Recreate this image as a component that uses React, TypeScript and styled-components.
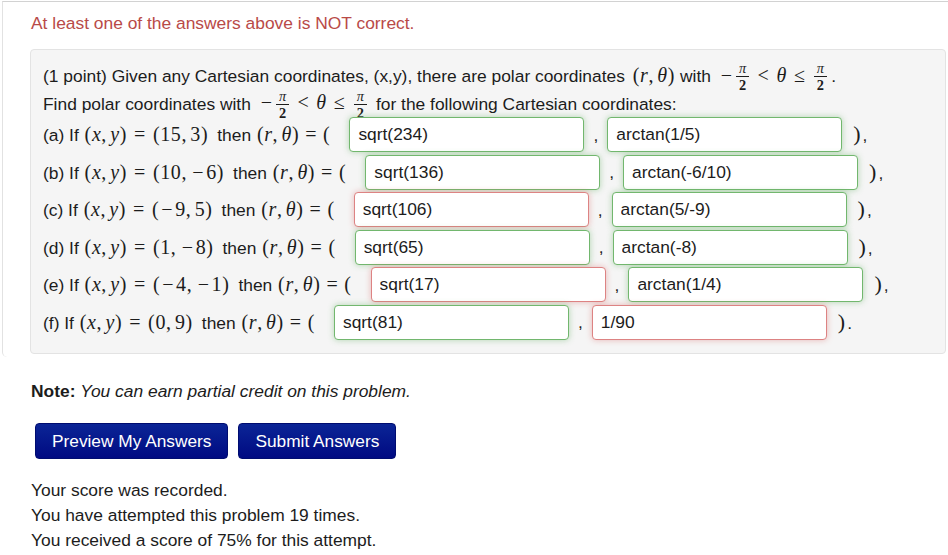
import React from 'react';
import styled, { createGlobalStyle } from 'styled-components';

const GlobalStyle = createGlobalStyle`
  body {
    margin: 0;
    background: #fff;
    color: #1c1c1c;
    font-family: "Liberation Sans", Arial, sans-serif;
    font-size: 17.4px;
  }
`;

const Outer = styled.div`
  margin: 1px 0 0 2px;
  padding: 11px 2px 3px 27px;
  border-top: 1px solid #d2d2d2;
  border-left: 1px solid #e2e2e2;
  border-bottom-left-radius: 5px;
`;

const ErrorMessage = styled.div`
  padding-left: 1px;
  line-height: 20px;
  color: #b94a48;
`;

const ProblemBox = styled.div`
  margin-top: 16px;
  padding: 11px 12px 12px;
  background: #f5f5f5;
  border: 1px solid #e3e3e3;
  border-radius: 4px;
`;

const TextLine = styled.div`
  height: 27.5px;
  line-height: 27.5px;
  white-space: nowrap;
`;

const Math = styled.span<{ $left?: number; $right?: number }>`
  font-family: "Liberation Serif", "Times New Roman", serif;
  font-size: 20px;
  letter-spacing: 0.6px;
  line-height: 1;
  padding: 0 ${(p) => p.$right ?? 9}px 0 ${(p) => p.$left ?? 1}px;
  white-space: nowrap;
`;

const V = styled.i`
  font-style: italic;
`;

const Minus = styled.span`
  padding: 0 0.1em;
`;

const Rel = styled.span<{ $tight?: boolean }>`
  margin: 0 ${(p) => (p.$tight ? '0.3em' : '0.35em')} 0 ${(p) => (p.$tight ? '0.3em' : '0.35em')};
`;

const Sep = styled.span`
  margin-right: 0.167em;
`;

const FracBox = styled.span`
  display: inline-flex;
  flex-direction: column;
  align-items: center;
  vertical-align: middle;
  font-size: 0.72em;
  line-height: 1;
  letter-spacing: 0;
  margin: 0 0.1em;
`;

const Num = styled.span`
  padding: 0 0.2em 1px;
  border-bottom: 1px solid currentColor;
  font-style: italic;
`;

const Den = styled.span`
  padding-top: 1px;
  font-weight: bold;
`;

const AnswerRow = styled.div`
  display: flex;
  align-items: center;
  height: 37.5px;
  white-space: nowrap;
`;

const Prompt = styled.span`
  line-height: 20px;
`;

const AnswerBox = styled.input<{ $ok: boolean }>`
  box-sizing: border-box;
  width: 235px;
  height: 35px;
  margin: 0;
  padding: 0 8px;
  font-family: "Liberation Sans", Arial, sans-serif;
  font-size: 17.4px;
  color: #1c1c1c;
  background: #fff;
  border-radius: 4px;
  outline: none;
  border: 1px solid ${(p) => (p.$ok ? '#72b76e' : '#dd8383')};
  box-shadow: 0 0 6px ${(p) => (p.$ok ? 'rgba(92, 170, 88, 0.45)' : 'rgba(214, 90, 88, 0.4)')};
`;

const FirstBox = styled(AnswerBox)`
  margin-left: 13px;
`;

const Comma = styled.span`
  margin: 0 9px;
  line-height: 20px;
`;

const Closing = styled.span`
  margin-left: 11px;
  line-height: 20px;
`;

const ClosingParen = styled.span`
  font-family: "Liberation Serif", "Times New Roman", serif;
  font-size: 22px;
  margin-right: 2px;
`;

const Lower = styled.div`
  padding-left: 31px;
`;

const Note = styled.div`
  margin-top: 24px;
  line-height: 20px;
  b {
    font-weight: bold;
  }
  i {
    font-style: italic;
  }
`;

const ButtonRow = styled.div`
  display: flex;
  gap: 10px;
  margin-top: 22px;
  padding-left: 4px;
`;

const ActionButton = styled.button`
  height: 36px;
  padding: 0 16px;
  font-family: "Liberation Sans", Arial, sans-serif;
  font-size: 17.3px;
  color: #fff;
  background: linear-gradient(to bottom, #0b2596, #000a82);
  border: 1px solid #000c70;
  border-radius: 4px;
  cursor: pointer;
`;

const Status = styled.div`
  margin-top: 19px;
  line-height: 25px;
`;

const HalfPi = () => (
  <FracBox>
    <Num>π</Num>
    <Den>2</Den>
  </FracBox>
);

const ThetaRange = () => (
  <Math $left={3} $right={3}>
    <Minus>−</Minus>
    <HalfPi />
    <Rel>&lt;</Rel>
    <V>θ</V>
    <Rel>≤</Rel>
    <HalfPi />
  </Math>
);

// numbers like "−6" get a wider minus, as the math typesetter draws it
const Num2 = ({ value }: { value: string }) =>
  value.startsWith('−') ? (
    <>
      <Minus>−</Minus>
      {value.slice(1)}
    </>
  ) : (
    <>{value}</>
  );

interface Row {
  tag: string;
  x: string;
  y: string;
  r: string;
  rOk: boolean;
  t: string;
  tOk: boolean;
}

const rows: Row[] = [
  { tag: 'a', x: '15', y: '3', r: 'sqrt(234)', rOk: true, t: 'arctan(1/5)', tOk: true },
  { tag: 'b', x: '10', y: '−6', r: 'sqrt(136)', rOk: true, t: 'arctan(-6/10)', tOk: true },
  { tag: 'c', x: '−9', y: '5', r: 'sqrt(106)', rOk: false, t: 'arctan(5/-9)', tOk: true },
  { tag: 'd', x: '1', y: '−8', r: 'sqrt(65)', rOk: true, t: 'arctan(-8)', tOk: true },
  { tag: 'e', x: '−4', y: '−1', r: 'sqrt(17)', rOk: false, t: 'arctan(1/4)', tOk: true },
  { tag: 'f', x: '0', y: '9', r: 'sqrt(81)', rOk: true, t: '1/90', tOk: false },
];

function App() {
  return (
    <>
      <GlobalStyle />
      <Outer>
        <ErrorMessage>At least one of the answers above is NOT correct.</ErrorMessage>
        <ProblemBox>
          <TextLine>
            (1 point) Given any Cartesian coordinates, (x,y), there are polar coordinates{' '}
            <Math $left={3} $right={5}>
              (<V>r</V>,<Sep />
              <V>θ</V>)
            </Math>
            with <ThetaRange />.
          </TextLine>
          <TextLine>
            Find polar coordinates with <ThetaRange /> for the following Cartesian coordinates:
          </TextLine>
          {rows.map((row, i) => (
            <AnswerRow key={row.tag}>
              <Prompt>
                ({row.tag}) If{' '}
                <Math>
                  (<V>x</V>,<Sep />
                  <V>y</V>)<Rel>=</Rel>(<Num2 value={row.x} />,<Sep />
                  <Num2 value={row.y} />)
                </Math>
                then{' '}
                <Math $right={6}>
                  (<V>r</V>,<Sep />
                  <V>θ</V>)<Rel $tight>=</Rel>(
                </Math>
              </Prompt>
              <FirstBox readOnly value={row.r} $ok={row.rOk} />
              <Comma>,</Comma>
              <AnswerBox readOnly value={row.t} $ok={row.tOk} />
              <Closing>
                <ClosingParen>)</ClosingParen>
                {i === rows.length - 1 ? '.' : ','}
              </Closing>
            </AnswerRow>
          ))}
        </ProblemBox>
      </Outer>
      <Lower>
        <Note>
          <b>Note:</b> <i>You can earn partial credit on this problem.</i>
        </Note>
        <ButtonRow>
          <ActionButton>Preview My Answers</ActionButton>
          <ActionButton>Submit Answers</ActionButton>
        </ButtonRow>
        <Status>
          Your score was recorded.
          <br />
          You have attempted this problem 19 times.
          <br />
          You received a score of 75% for this attempt.
        </Status>
      </Lower>
    </>
  );
}

export default App;
